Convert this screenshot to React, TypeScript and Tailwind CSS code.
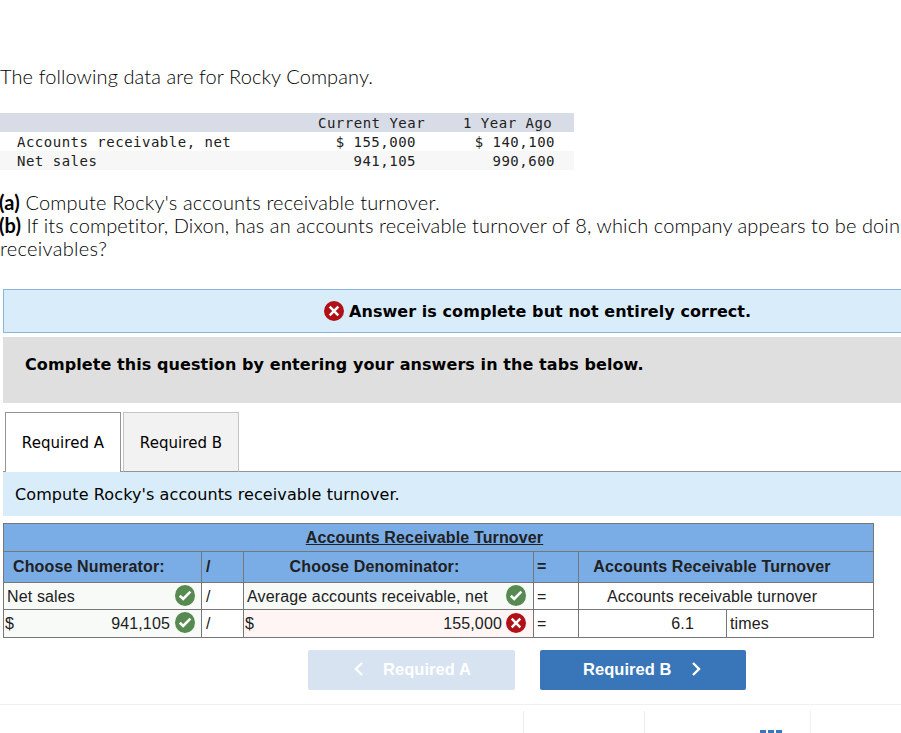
import type { ReactNode } from "react";

const body = "font-['Lato',sans-serif] text-[20px] font-light text-black tracking-[0.1px] [font-variant-ligatures:none]";
const verdana = "font-['DejaVu_Sans',Verdana,sans-serif] text-black";

function CheckIcon() {
  return (
    <svg className="block h-[21px] w-5 shrink-0" viewBox="0 0 20 21">
      <ellipse cx="10" cy="10.5" rx="10" ry="10.5" fill="#578a50" />
      <path d="M4.8 10.8l3.4 3.2 7.2-7.4" fill="none" stroke="#fff" strokeWidth="2.6" />
    </svg>
  );
}

function CrossIcon() {
  return (
    <svg className="block h-5 w-5 shrink-0" viewBox="0 0 20 20">
      <circle cx="10" cy="10" r="10" fill="#b11116" />
      <path d="M5.7 5.7l8.6 8.6M14.3 5.7l-8.6 8.6" fill="none" stroke="#fff" strokeWidth="2.5" />
    </svg>
  );
}

function Cell({ className = "", children }: { className?: string; children?: ReactNode }) {
  return (
    <div className={`flex items-center whitespace-nowrap border-b border-r border-[#777] ${className}`}>
      {children}
    </div>
  );
}

function DataRow({ label, current, prior, className = "" }: { label: string; current: string; prior: string; className?: string }) {
  return (
    <div className={`flex h-[19px] items-center whitespace-pre ${className}`}>
      <span className="w-[280px] pl-[17px]">{label}</span>
      <span className="w-[136px] text-right">{current}</span>
      <span className="w-[139px] text-right">{prior}</span>
    </div>
  );
}

function TurnoverTable() {
  return (
    <div className="ml-[3px] mt-[7px] grid w-[871px] grid-cols-[198px_42px_290px_45px_148px_147px] grid-rows-[28px_31px_27px_28px] border-l border-t border-[#777] font-['Liberation_Sans',Arial,sans-serif] text-[16px] leading-none tracking-[0.14px] text-[#212121]">
      <Cell className="col-span-6 justify-center bg-[#7aace6] pr-7 font-bold"><span className="underline">Accounts Receivable Turnover</span></Cell>
      <Cell className="bg-[#7aace6] pl-[9px] font-bold">Choose Numerator:</Cell>
      <Cell className="bg-[#7aace6] pl-1 font-bold">/</Cell>
      <Cell className="justify-center bg-[#7aace6] pr-[28px] font-bold">Choose Denominator:</Cell>
      <Cell className="bg-[#7aace6] pl-[3px] font-bold">=</Cell>
      <Cell className="col-span-2 justify-center bg-[#7aace6] pr-[28px] font-bold">Accounts Receivable Turnover</Cell>

      <Cell className="justify-between bg-[#f7faf7] pl-[3px] pr-1.5"><span className="pt-px">Net sales</span><span className="-mt-0.5"><CheckIcon /></span></Cell>
      <Cell className="pl-1 pt-px">/</Cell>
      <Cell className="justify-between bg-[#f7faf7] pl-[3px] pr-[7px]"><span className="pt-px">Average accounts receivable, net</span><span className="-mt-0.5"><CheckIcon /></span></Cell>
      <Cell className="pl-[3px] pt-px">=</Cell>
      <Cell className="col-span-2 justify-center pr-[28px] pt-px">Accounts receivable turnover</Cell>

      <Cell className="bg-[#f7faf7] pl-px pr-1.5"><span className="flex-1">$</span><span className="mr-[5px]">941,105</span><span className="-mt-0.5"><CheckIcon /></span></Cell>
      <Cell className="pl-1">/</Cell>
      <Cell className="bg-[#fff5f4] pl-px pr-[7px]"><span className="flex-1">$</span><span className="mr-[4px]">155,000</span><span className="-mt-0.5"><CrossIcon /></span></Cell>
      <Cell className="pl-[3px]">=</Cell>
      <Cell className="justify-end pr-8">6.1</Cell>
      <Cell className="pl-[3px]">times</Cell>
    </div>
  );
}

export default function App() {
  return (
    <main className="flex h-[733px] w-[901px] flex-col overflow-hidden bg-white">
      <p className={`${body} mt-16 h-[49px] shrink-0 whitespace-nowrap leading-[25px]`}>The following data are for Rocky Company.</p>

      <div className="h-[57px] w-[574px] shrink-0 font-['DejaVu_Sans_Mono',monospace] text-[14px] leading-none tracking-[0.5px] text-[#212121]">
        <div className="flex h-[19px] items-center bg-[#d8dce7]">
          <span className="ml-[318px] w-[145px]">Current Year</span>
          <span>1 Year Ago</span>
        </div>
        <DataRow label="Accounts receivable, net" current="$ 155,000" prior="$ 140,100" />
        <DataRow className="bg-[#f7f7f7]" label="Net sales" current="941,105" prior="990,600" />
      </div>

      <div className={`${body} mt-[21px] h-[98px] shrink-0 whitespace-nowrap leading-[23px]`}>
        <p className="-ml-px tracking-[0.17px]"><b className="font-bold">(a)</b> Compute Rocky's accounts receivable turnover.</p>
        <p className="-ml-px"><b className="font-bold">(b)</b> If its competitor, Dixon, has an accounts receivable turnover of 8, which company appears to be doin</p>
        <p className="tracking-[0.3px]">receivables?</p>
      </div>

      <div className={`${verdana} ml-[3px] flex h-11 shrink-0 items-center border-y border-l border-[#8ab4dc] bg-[#d9ecfa] pl-[320px] text-[16px] font-bold tracking-[0.06px]`}>
        <CrossIcon />
        <span className="ml-[5px] whitespace-nowrap pt-0.5">Answer is complete but not entirely correct.</span>
      </div>
      <div className={`${verdana} ml-[3px] mt-1 h-[66px] shrink-0 whitespace-nowrap bg-[#dfdfdf] pl-[22px] pt-4 text-[16px] font-bold leading-6 tracking-[0.08px]`}>
        Complete this question by entering your answers in the tabs below.
      </div>

      <div className={`${verdana} ml-[3px] mt-[9px] flex h-[60px] shrink-0 text-[15px] tracking-[0.05px]`}>
        <div className="w-0.5 border-b border-[#949494]" />
        <div className="flex w-[116px] items-center justify-center border-x border-t border-[#949494] pt-px">Required A</div>
        <div className="w-0.5 border-b border-[#949494]" />
        <div className="flex w-[116px] items-center justify-center border border-[#c4c4c4] border-b-[#949494] bg-[#f2f2f2] pt-0.5">Required B</div>
        <div className="flex-1 border-b border-[#949494]" />
      </div>
      <div className={`${verdana} ml-[3px] flex h-11 shrink-0 items-center bg-[#d9ecfa] pl-3 pt-0.5 text-[16px] tracking-[0.1px]`}>
        Compute Rocky's accounts receivable turnover.
      </div>

      <TurnoverTable />

      <div className="mt-3 flex h-10 shrink-0 gap-[25px] pl-[308px] font-['Liberation_Sans',Arial,sans-serif] text-[16.5px] font-bold tracking-[0.05px] text-white">
        <button className="flex w-[207px] items-center rounded-xs bg-[#d7e3f1] pb-0.5 pl-[46px]">
          <svg className="mr-5 h-[14px] w-[9px]" viewBox="0 0 9 14"><path d="M8 1L2 7l6 6" fill="none" stroke="#fff" strokeWidth="2.4" /></svg>
          Required A
        </button>
        <button className="flex w-[206px] items-center rounded-xs bg-[#3975b9] pb-0.5 pl-[43px]">
          Required B
          <svg className="ml-5 h-[14px] w-[9px]" viewBox="0 0 9 14"><path d="M1 1l6 6-6 6" fill="none" stroke="#fff" strokeWidth="2.4" /></svg>
        </button>
      </div>

      <footer className="mt-[14px] flex h-[29px] shrink-0 border-t border-[#f0f0f0] pt-1.5">
        <div className="w-[523px]" />
        <div className="w-[121px] border-l border-[#eee]" />
        <div className="flex w-[166px] items-end gap-0.5 border-l border-[#eee] pl-[115px]">
          <span className="h-[3px] w-1.5 bg-[#3975b9]" />
          <span className="h-[3px] w-1.5 bg-[#3975b9]" />
          <span className="h-[3px] w-1.5 bg-[#3975b9]" />
        </div>
        <div className="border-l border-[#eee]" />
      </footer>
    </main>
  );
}
